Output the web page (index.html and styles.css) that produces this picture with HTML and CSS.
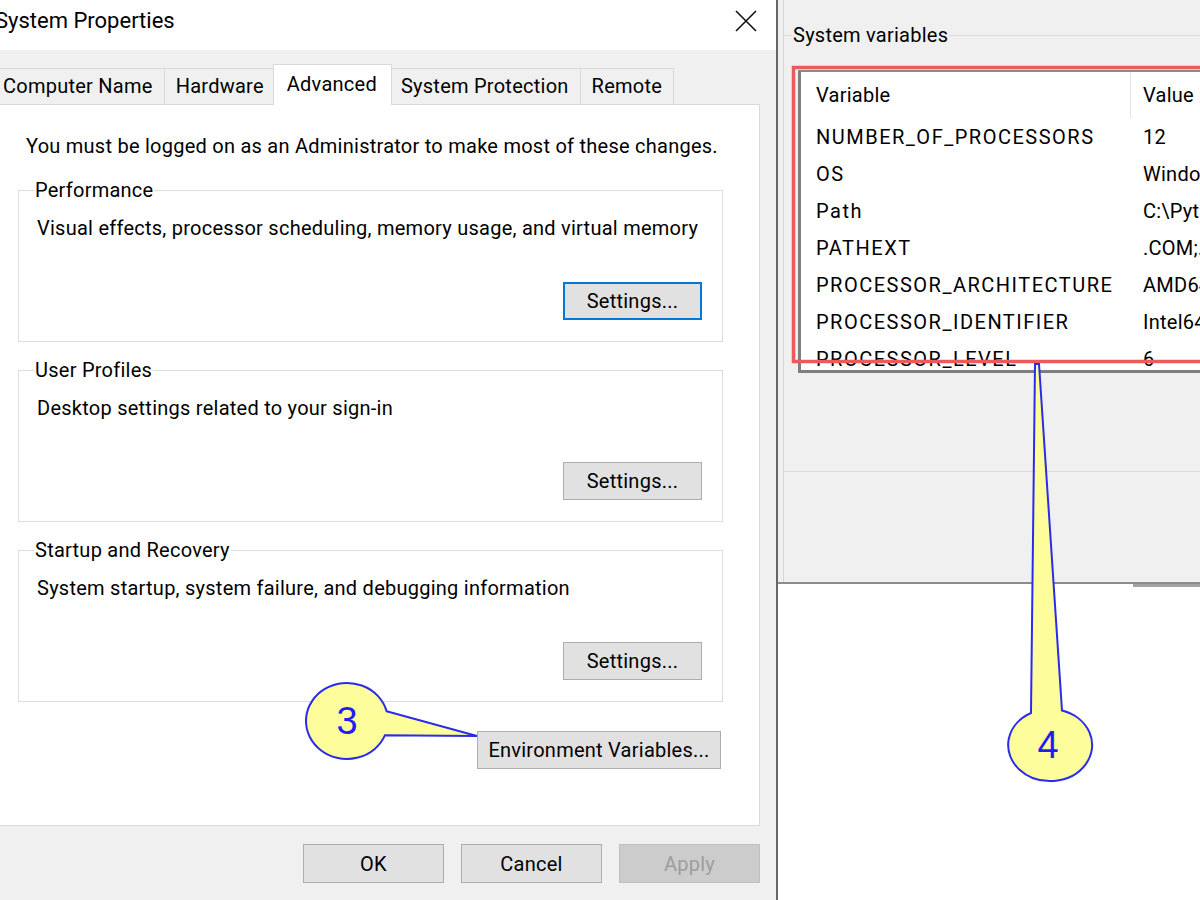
FILE: index.html
```html
<!DOCTYPE html>
<html>
<head>
<meta charset="utf-8">
<title>System Properties</title>
<link rel="stylesheet" href="styles.css">
</head>
<body>
<div class="screen">
  <div class="sysprops">
    <div class="titlebar">
      <span class="title">System Properties</span>
      <svg class="close" width="22" height="22" viewBox="0 0 22 22"><path d="M1 1 L21 21 M21 1 L1 21" stroke="#111" stroke-width="1.6" fill="none"/></svg>
    </div>
    <div class="dlg-body">
      <div class="tabs">
        <div class="tab">Computer Name</div>
        <div class="tab">Hardware</div>
        <div class="tab active">Advanced</div>
        <div class="tab">System Protection</div>
        <div class="tab">Remote</div>
      </div>
      <div class="panel">
        <p class="note">You must be logged on as an Administrator to make most of these changes.</p>
        <fieldset class="group">
          <legend>Performance</legend>
          <p class="desc">Visual effects, processor scheduling, memory usage, and virtual memory</p>
          <div class="btn-row"><button class="btn settings focused">Settings...</button></div>
        </fieldset>
        <fieldset class="group">
          <legend>User Profiles</legend>
          <p class="desc">Desktop settings related to your sign-in</p>
          <div class="btn-row"><button class="btn settings">Settings...</button></div>
        </fieldset>
        <fieldset class="group">
          <legend>Startup and Recovery</legend>
          <p class="desc">System startup, system failure, and debugging information</p>
          <div class="btn-row"><button class="btn settings">Settings...</button></div>
        </fieldset>
        <div class="env-row"><button class="btn env">Environment Variables...</button></div>
      </div>
      <div class="actions">
        <button class="btn action">OK</button>
        <button class="btn action">Cancel</button>
        <button class="btn action disabled">Apply</button>
      </div>
    </div>
  </div>
  <div class="divider"></div>
  <div class="envvars">
    <div class="ev-top">
      <div class="ev-frame">
        <fieldset class="sysvars">
          <legend>System variables</legend>
          <div class="listbox">
            <div class="lrow header"><span class="c1">Variable</span><span class="c2">Value</span></div>
            <div class="lrow"><span class="c1">NUMBER_OF_PROCESSORS</span><span class="c2">12</span></div>
            <div class="lrow"><span class="c1">OS</span><span class="c2">Windows_NT</span></div>
            <div class="lrow"><span class="c1">Path</span><span class="c2">C:\Python38\Scripts\</span></div>
            <div class="lrow"><span class="c1">PATHEXT</span><span class="c2">.COM;.EXE;.BAT;.CMD</span></div>
            <div class="lrow"><span class="c1">PROCESSOR_ARCHITECTURE</span><span class="c2">AMD64</span></div>
            <div class="lrow"><span class="c1">PROCESSOR_IDENTIFIER</span><span class="c2">Intel64 Family 6</span></div>
            <div class="lrow"><span class="c1">PROCESSOR_LEVEL</span><span class="c2">6</span></div>
          </div>
        </fieldset>
      </div>
    </div>
    <div class="ev-bottom"><div class="scroll-hint"></div></div>
  </div>
  <svg class="callouts" width="1200" height="900" viewBox="0 0 1200 900">
    <rect x="793.5" y="67.5" width="440" height="294" fill="none" stroke="#ec5b5b" stroke-width="3.5"/>
    <path d="M386.6,711.2 L477,736 L385,735.2 A41,38 0 1,1 386.6,711.2 Z" fill="#fdfd9c" stroke="#2b2bea" stroke-width="2"/>
    <text x="347" y="734" text-anchor="middle" class="callout-num">3</text>
    <path d="M1031,713 L1035,364 L1039,364 L1062,710.5 A42,36 0 1,1 1031,713 Z" fill="#fdfd9c" stroke="#2b2bea" stroke-width="2"/>
    <text x="1048" y="758" text-anchor="middle" class="callout-num">4</text>
  </svg>
</div>
</body>
</html>
```

FILE: styles.css
```css
html, body {
  margin: 0;
  padding: 0;
}
body {
  width: 1200px;
  height: 900px;
  overflow: hidden;
  background: #fff;
  color: #000;
  font-family: "Segoe UI", Roboto, "Noto Sans", sans-serif;
  font-size: 20px;
  letter-spacing: 0.25px;
}
.screen {
  position: relative;
  display: flex;
  width: 1200px;
  height: 900px;
  overflow: hidden;
}
.sysprops {
  width: 776px;
  flex: none;
  background: #f0f0f0;
  display: flex;
  flex-direction: column;
}
.titlebar {
  height: 50px;
  flex: none;
  background: #fff;
  display: flex;
  align-items: flex-start;
  justify-content: space-between;
  box-sizing: border-box;
  padding: 6px 19px 0 0;
}
.title {
  margin-left: -5px;
  font-size: 22px;
  line-height: 30px;
  letter-spacing: 0;
}
.close {
  margin-top: 4px;
}
.dlg-body {
  flex: 1;
  display: flex;
  flex-direction: column;
  padding-top: 14px;
}
.tabs {
  display: flex;
  align-items: flex-end;
  margin-left: -9px;
  position: relative;
  z-index: 1;
}
.tab {
  height: 36px;
  box-sizing: border-box;
  padding: 0 11px;
  line-height: 34px;
  border: 1px solid #d9d9d9;
  border-bottom: none;
  background: #f0f0f0;
  white-space: nowrap;
}
.tab + .tab {
  margin-left: -1px;
}
.tab.active {
  height: 41px;
  line-height: 38px;
  background: #fff;
  margin: 0 -2px -1px -3px;
  padding: 0 14px 0 13px;
  position: relative;
  z-index: 2;
}
.panel {
  margin-left: -9px;
  width: 769px;
  height: 722px;
  box-sizing: border-box;
  background: #fff;
  border: 1px solid #d9d9d9;
  padding: 28px 36px 0 26px;
}
.note {
  margin: 0 0 18px 8px;
  line-height: 26px;
}
.group {
  margin: 0 0 15px 0;
  min-width: 0;
  border: 1px solid #dcdcdc;
  padding: 0 20px 21px 15px;
}
.group legend {
  padding: 0 1px;
  line-height: 26px;
}
.desc {
  margin: 12px 0 0 3px;
  line-height: 26px;
  white-space: nowrap;
}
.btn-row {
  display: flex;
  justify-content: flex-end;
  margin-top: 41px;
}
.btn {
  font-family: inherit;
  font-size: 20px;
  letter-spacing: 0.25px;
  color: #000;
  background: #e1e1e1;
  border: 1px solid #adadad;
  padding: 0;
  box-sizing: border-box;
}
.settings {
  width: 139px;
  height: 38px;
}
.settings.focused {
  border: 2px solid #0078d7;
}
.env-row {
  display: flex;
  justify-content: flex-end;
  margin-top: 29px;
  padding-right: 2px;
}
.env {
  width: 244px;
  height: 38px;
}
.actions {
  display: flex;
  justify-content: flex-end;
  gap: 17px;
  margin-top: 18px;
  padding-right: 16px;
}
.action {
  width: 141px;
  height: 39px;
}
.action.disabled {
  background: #cccccc;
  border-color: #bfbfbf;
  color: #9d9d9d;
}
.divider {
  width: 2px;
  flex: none;
  background: #666;
}
.envvars {
  flex: 1;
  min-width: 0;
  background: #fff;
  overflow: hidden;
  display: flex;
  flex-direction: column;
}
.ev-top {
  height: 584px;
  flex: none;
  box-sizing: border-box;
  background: #f0f0f0;
  border-bottom: 2px solid #8c8c8c;
  padding-left: 5px;
}
.ev-frame {
  height: 100%;
  border-left: 1px solid #d6d6d6;
  padding-top: 22px;
  box-sizing: border-box;
}
.sysvars {
  margin: 0;
  min-width: 0;
  width: 500px;
  border: none;
  border-top: 1px solid #dcdcdc;
  border-bottom: 1px solid #dcdcdc;
  padding: 0 0 98px 8px;
}
.sysvars legend {
  padding: 0 1px;
  line-height: 26px;
}
.listbox {
  margin: 22px 0 0 6px;
  width: 440px;
  height: 303px;
  box-sizing: border-box;
  overflow: hidden;
  background: #fff;
  border-left: 3px solid #7f7f7f;
  border-top: 2px solid #8a8a8a;
  border-bottom: 3px solid #7f7f7f;
}
.lrow {
  display: flex;
  height: 37px;
  align-items: center;
  white-space: nowrap;
}
.lrow.header {
  height: 46px;
}
.c1 {
  width: 330px;
  flex: none;
  box-sizing: border-box;
  padding-left: 15px;
  letter-spacing: 1.5px;
}
.header .c1 {
  align-self: stretch;
  display: flex;
  align-items: center;
  border-right: 1px solid #e3e3e3;
  letter-spacing: 0.25px;
}
.c2 {
  padding-left: 12px;
}
.ev-bottom {
  flex: 1;
}
.scroll-hint {
  margin-left: 355px;
  height: 3px;
  background: #a3a3a3;
}
.callouts {
  position: absolute;
  left: 0;
  top: 0;
  pointer-events: none;
}
.callout-num {
  font-family: "Liberation Sans", Arial, sans-serif;
  font-size: 38px;
  letter-spacing: 0;
  fill: #1e1ef0;
}
```
